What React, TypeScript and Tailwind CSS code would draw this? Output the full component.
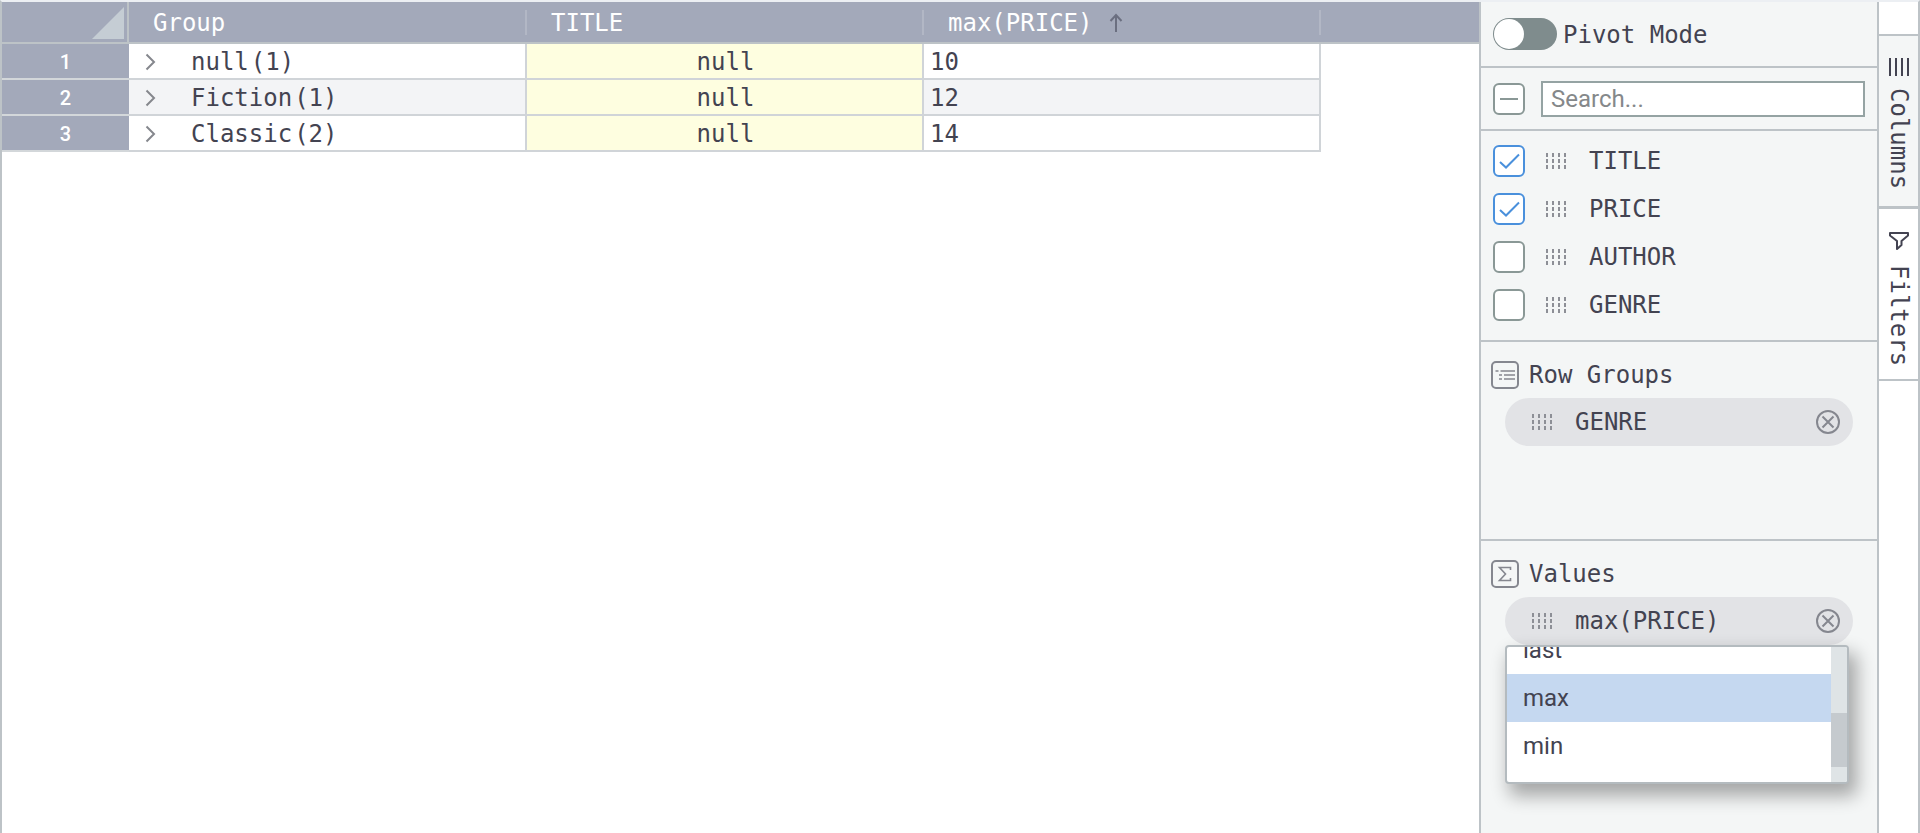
import { useState } from "react";

type Column = { name: string; visible: boolean };
type Row = { group: string; count: number; title: string; price: number };

const ROWS: Row[] = [
  { group: "null", count: 1, title: "null", price: 10 },
  { group: "Fiction", count: 1, title: "null", price: 12 },
  { group: "Classic", count: 2, title: "null", price: 14 },
];

const COLUMNS: Column[] = [
  { name: "TITLE", visible: true },
  { name: "PRICE", visible: true },
  { name: "AUTHOR", visible: false },
  { name: "GENRE", visible: false },
];

const AGG_FUNCS = ["last", "max", "min"];

function Grip() {
  return (
    <svg width="22" height="18" viewBox="0 0 22 18" className="shrink-0" aria-hidden="true">
      <path
        d="M2 1v4M8 1v4M14 1v4M20 1v4M2 7v4M8 7v4M14 7v4M20 7v4M2 13v4M8 13v4M14 13v4M20 13v4"
        stroke="#8d8f96"
        strokeWidth="2"
      />
    </svg>
  );
}

function Chevron() {
  return (
    <svg width="12" height="18" viewBox="0 0 12 18" fill="none" stroke="#85878d" strokeWidth="2">
      <path d="M1.500 1.500L9 9l-7.500 7.500" />
    </svg>
  );
}

function HeaderCell({ label, sorted }: { label: string; sorted?: boolean }) {
  return (
    <th scope="col" className="h-[42px] border-b-2 border-[#bdc3c7] p-0 font-normal text-white">
      <div className="flex items-center border-r-2 border-[#b2b7c5] pt-px pl-6">
        <span className="leading-6">{label}</span>
        {sorted && (
          <svg width="14" height="20" viewBox="0 0 14 20" fill="none" stroke="#6b6f80" strokeWidth="2" className="ml-4">
            <path d="M7 19V2M1.5 8L7 2l5.5 6" />
          </svg>
        )}
      </div>
    </th>
  );
}

function Grid() {
  return (
    <main className="min-w-0 flex-1">
      <table className="w-full table-fixed border-separate border-spacing-0 text-left">
        <colgroup>
          <col className="w-[127px]" />
          <col className="w-[398px]" />
          <col className="w-[397px]" />
          <col className="w-[397px]" />
          <col />
        </colgroup>
        <thead className="bg-[#a3a9ba]">
          <tr>
            <th className="h-[42px] border-r-2 border-b-2 border-[#bdc3c7] p-0">
              <button aria-label="Select all" className="ml-auto block pt-0.5 pr-[3px]">
                <svg width="32" height="32" viewBox="0 0 32 32" fill="#c5cdd4">
                  <path d="M32 0v32H0z" />
                </svg>
              </button>
            </th>
            <HeaderCell label="Group" />
            <HeaderCell label="TITLE" />
            <HeaderCell label="max(PRICE)" sorted />
            <th className="border-b-2 border-[#bdc3c7]" />
          </tr>
        </thead>
        <tbody>
          {ROWS.map((row, i) => (
            <tr key={row.group} className={i % 2 ? "bg-[#f3f4f6]" : "bg-white"}>
              <th
                scope="row"
                className="h-9 border-b-2 border-[#d3d7da] bg-[#a3a9ba] p-0 pt-px text-center font-['Roboto'] text-xl leading-6 font-medium text-white"
              >
                {i + 1}
              </th>
              <td className="border-r-2 border-b-2 border-[#d0d4d8] p-0 pt-0.5">
                <div className="flex items-center pl-4">
                  <button aria-label={`Expand ${row.group}`} className="mr-[34px]">
                    <Chevron />
                  </button>
                  <span className="leading-6">{row.group}</span>
                  <span className="ml-0.5 leading-6">({row.count})</span>
                </div>
              </td>
              <td className="border-r-2 border-b-2 border-[#d0d4d8] bg-[#fefee0] p-0 pt-0.5 pl-0.5 text-center leading-6">{row.title}</td>
              <td className="border-r-2 border-b-2 border-[#d0d4d8] p-0 pt-0.5 pl-1.5 leading-6">{row.price}</td>
              <td className="bg-white p-0" />
            </tr>
          ))}
        </tbody>
      </table>
    </main>
  );
}

function ColumnCheckbox({ column, onToggle }: { column: Column; onToggle: () => void }) {
  return (
    <label className="flex h-12 items-center pl-3">
      <span className="grid size-8 shrink-0">
        <input
          type="checkbox"
          checked={column.visible}
          onChange={onToggle}
          className="col-start-1 row-start-1 size-8 appearance-none rounded-md border-2 border-[#8a9896] bg-white checked:border-[#4a90dc]"
        />
        {column.visible && (
          <svg viewBox="0 0 32 32" fill="none" stroke="#4a90dc" strokeWidth="2" className="pointer-events-none col-start-1 row-start-1">
            <path d="M7 17l6 5.5L26 9.5" />
          </svg>
        )}
      </span>
      <span className="mr-[22px] ml-5 flex">
        <Grip />
      </span>
      <span>{column.name}</span>
    </label>
  );
}

function Pill({ label }: { label: string }) {
  return (
    <div className="mr-6 ml-6 flex h-12 items-center rounded-full bg-[#e2e3e6] pr-3 pl-[26px]">
      <Grip />
      <span className="ml-[22px] flex-1">{label}</span>
      <button aria-label={`Remove ${label}`}>
        <svg width="26" height="26" viewBox="0 0 26 26" fill="none" stroke="#85878f" strokeWidth="2">
          <circle cx="13" cy="13" r="11" />
          <path d="M7.5 7.5l11 11M18.5 7.5l-11 11" />
        </svg>
      </button>
    </div>
  );
}

function GroupIcon() {
  return (
    <svg width="28" height="28" viewBox="0 0 28 28" fill="none" stroke="#85878f" strokeWidth="2">
      <rect x="1" y="1" width="26" height="26" rx="4" />
      <path strokeWidth="1.6" d="M4.500 10h3M9.500 10h14.500M8 14h3M13 14h11M8 18h3M13 18h11" />
    </svg>
  );
}

function SumIcon() {
  return (
    <svg width="28" height="28" viewBox="0 0 28 28" fill="none" stroke="#85878f" strokeWidth="2">
      <rect x="1" y="1" width="26" height="26" rx="4" />
      <path strokeWidth="1.6" d="M19.500 10V7.500H8.500L14.500 14l-6 6.500h11V18" />
    </svg>
  );
}

function AggregationList({ value, onChange }: { value: string; onChange: (v: string) => void }) {
  return (
    <div
      role="listbox"
      aria-label="Aggregation function"
      className="absolute top-full right-7 left-6 flex h-[139px] overflow-hidden rounded-sm border-2 border-[#b4bbbf] bg-white font-['Roboto'] shadow-[6px_10px_18px_2px_rgba(0,0,0,0.32)]"
    >
      <div className="flex flex-1 flex-col justify-end overflow-hidden pb-3">
        {AGG_FUNCS.map((fn) => (
          <button
            key={fn}
            role="option"
            aria-selected={fn === value}
            onClick={() => onChange(fn)}
            className={`h-12 shrink-0 pl-4 text-left ${fn === value ? "bg-[#c5d8f0]" : ""}`}
          >
            {fn}
          </button>
        ))}
      </div>
      <div className="flex w-4 flex-col justify-end bg-[#dfe4e6] pb-[15px]">
        <div className="h-[54px] bg-[#c5cace]" />
      </div>
    </div>
  );
}

function ToolPanel() {
  const [pivot, setPivot] = useState(false);
  const [search, setSearch] = useState("");
  const [columns, setColumns] = useState(COLUMNS);
  const [agg, setAgg] = useState("max");

  const toggle = (name: string) =>
    setColumns(columns.map((c) => (c.name === name ? { ...c, visible: !c.visible } : c)));

  return (
    <aside className="flex w-[400px] shrink-0 flex-col border-x-2 border-[#bdc3c7] bg-[#f4f6f6]">
      <label className="flex h-[66px] shrink-0 items-center border-b-2 border-[#bdc3c7] pl-3">
        <span className="relative flex h-8 w-16">
          <input
            type="checkbox"
            role="switch"
            checked={pivot}
            onChange={() => setPivot(!pivot)}
            className="peer h-8 w-16 appearance-none rounded-full bg-[#7f8c8d] checked:bg-[#4a90dc]"
          />
          <span className="pointer-events-none absolute top-px left-px size-[30px] rounded-full bg-white peer-checked:left-[33px]" />
        </span>
        <span className="ml-1.5 pt-0.5">Pivot Mode</span>
      </label>

      <div className="flex h-[63px] shrink-0 items-center gap-4 border-b-2 border-[#bdc3c7] pr-3 pl-3">
        <button aria-label="Toggle all columns" className="grid size-8 shrink-0 place-items-center rounded-md border-2 border-[#8a9896] bg-white">
          <span className="h-0.5 w-[18px] bg-[#8a9896]" />
        </button>
        <input
          type="text"
          aria-label="Search columns"
          placeholder="Search..."
          value={search}
          onChange={(e) => setSearch(e.target.value)}
          className="h-9 min-w-0 flex-1 border-2 border-[#95a3a3] bg-white px-2 font-['Roboto'] placeholder:text-[#85888a]"
        />
      </div>

      <div className="h-[211px] shrink-0 border-b-2 border-[#bdc3c7] pt-1.5">
        {columns
          .filter((c) => c.name.toLowerCase().includes(search.toLowerCase()))
          .map((c) => (
            <ColumnCheckbox key={c.name} column={c} onToggle={() => toggle(c.name)} />
          ))}
      </div>

      <section className="h-[199px] shrink-0 border-b-2 border-[#bdc3c7] pt-2.5">
        <h2 className="flex h-[46px] items-center gap-2.5 pl-2.5">
          <GroupIcon />
          Row Groups
        </h2>
        <Pill label="GENRE" />
      </section>

      <section className="flex-1 pt-2.5">
        <h2 className="flex h-[46px] items-center gap-2.5 pl-2.5">
          <SumIcon />
          Values
        </h2>
        <div className="relative">
          <Pill label={`${agg}(PRICE)`} />
          <AggregationList value={agg} onChange={setAgg} />
        </div>
      </section>
    </aside>
  );
}

function SideTabs() {
  return (
    <nav className="flex w-[39px] shrink-0 flex-col bg-white pt-8" aria-label="Tool panels">
      <button className="flex h-[172px] flex-col items-center gap-3 border-t-2 border-[#bdc3c7] bg-[#f4f6f6] pt-[22px]">
        <svg width="22" height="18" viewBox="0 0 22 18" stroke="#434351" strokeWidth="2" className="shrink-0">
          <path d="M2 0v18M8 0v18M14 0v18M20 0v18" />
        </svg>
        <span className="leading-6 [writing-mode:vertical-rl]">Columns</span>
      </button>
      <button className="flex h-[175px] flex-col items-center gap-3.5 border-t-3 border-b-2 border-[#bdc3c7] bg-white pt-[22px]">
        <svg width="22" height="20" viewBox="0 0 22 20" fill="none" stroke="#434351" strokeWidth="2" strokeLinejoin="round" className="shrink-0">
          <path d="M2 2h18v2.500l-6.500 5.500v4l-4.500 4v-8L2 4.500z" />
        </svg>
        <span className="leading-6 [writing-mode:vertical-rl]">Filters</span>
      </button>
    </nav>
  );
}

export default function App() {
  return (
    <div className="flex min-h-screen border-x-2 border-t-2 border-x-[#bdc3c7] border-t-[#eceff3] bg-white font-['DejaVu_Sans_Mono',monospace] text-2xl text-[#434351]">
      <Grid />
      <ToolPanel />
      <SideTabs />
    </div>
  );
}
